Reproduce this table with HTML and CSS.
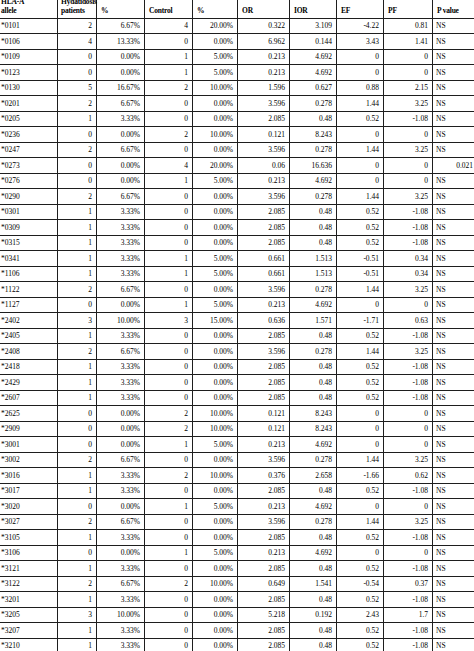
FILE: index.html
```html
<!DOCTYPE html>
<html>
<head>
<meta charset="utf-8">
<link rel="stylesheet" href="styles.css">
</head>
<body>
<table class="hla">
<colgroup>
<col class="c1"><col class="c2"><col class="c3"><col class="c4"><col class="c5"><col class="c6"><col class="c7"><col class="c8"><col class="c9"><col class="c10">
</colgroup>
<thead>
<tr><th>HLA-A<br>allele</th><th>Hydatidosis<br>patients</th><th>%</th><th>Control</th><th>%</th><th>OR</th><th>IOR</th><th>EF</th><th>PF</th><th>P value</th></tr>
</thead>
<tbody>
<tr><td>*0101</td><td>2</td><td>6.67%</td><td>4</td><td>20.00%</td><td>0.322</td><td>3.109</td><td>-4.22</td><td>0.81</td><td class="p">NS</td></tr>
<tr><td>*0106</td><td>4</td><td>13.33%</td><td>0</td><td>0.00%</td><td>6.962</td><td>0.144</td><td>3.43</td><td>1.41</td><td class="p">NS</td></tr>
<tr><td>*0109</td><td>0</td><td>0.00%</td><td>1</td><td>5.00%</td><td>0.213</td><td>4.692</td><td>0</td><td>0</td><td class="p">NS</td></tr>
<tr><td>*0123</td><td>0</td><td>0.00%</td><td>1</td><td>5.00%</td><td>0.213</td><td>4.692</td><td>0</td><td>0</td><td class="p">NS</td></tr>
<tr><td>*0130</td><td>5</td><td>16.67%</td><td>2</td><td>10.00%</td><td>1.596</td><td>0.627</td><td>0.88</td><td>2.15</td><td class="p">NS</td></tr>
<tr><td>*0201</td><td>2</td><td>6.67%</td><td>0</td><td>0.00%</td><td>3.596</td><td>0.278</td><td>1.44</td><td>3.25</td><td class="p">NS</td></tr>
<tr><td>*0205</td><td>1</td><td>3.33%</td><td>0</td><td>0.00%</td><td>2.085</td><td>0.48</td><td>0.52</td><td>-1.08</td><td class="p">NS</td></tr>
<tr><td>*0236</td><td>0</td><td>0.00%</td><td>2</td><td>10.00%</td><td>0.121</td><td>8.243</td><td>0</td><td>0</td><td class="p">NS</td></tr>
<tr><td>*0247</td><td>2</td><td>6.67%</td><td>0</td><td>0.00%</td><td>3.596</td><td>0.278</td><td>1.44</td><td>3.25</td><td class="p">NS</td></tr>
<tr><td>*0273</td><td>0</td><td>0.00%</td><td>4</td><td>20.00%</td><td>0.06</td><td>16.636</td><td>0</td><td>0</td><td>0.021</td></tr>
<tr><td>*0276</td><td>0</td><td>0.00%</td><td>1</td><td>5.00%</td><td>0.213</td><td>4.692</td><td>0</td><td>0</td><td class="p">NS</td></tr>
<tr><td>*0290</td><td>2</td><td>6.67%</td><td>0</td><td>0.00%</td><td>3.596</td><td>0.278</td><td>1.44</td><td>3.25</td><td class="p">NS</td></tr>
<tr><td>*0301</td><td>1</td><td>3.33%</td><td>0</td><td>0.00%</td><td>2.085</td><td>0.48</td><td>0.52</td><td>-1.08</td><td class="p">NS</td></tr>
<tr><td>*0309</td><td>1</td><td>3.33%</td><td>0</td><td>0.00%</td><td>2.085</td><td>0.48</td><td>0.52</td><td>-1.08</td><td class="p">NS</td></tr>
<tr><td>*0315</td><td>1</td><td>3.33%</td><td>0</td><td>0.00%</td><td>2.085</td><td>0.48</td><td>0.52</td><td>-1.08</td><td class="p">NS</td></tr>
<tr><td>*0341</td><td>1</td><td>3.33%</td><td>1</td><td>5.00%</td><td>0.661</td><td>1.513</td><td>-0.51</td><td>0.34</td><td class="p">NS</td></tr>
<tr><td>*1106</td><td>1</td><td>3.33%</td><td>1</td><td>5.00%</td><td>0.661</td><td>1.513</td><td>-0.51</td><td>0.34</td><td class="p">NS</td></tr>
<tr><td>*1122</td><td>2</td><td>6.67%</td><td>0</td><td>0.00%</td><td>3.596</td><td>0.278</td><td>1.44</td><td>3.25</td><td class="p">NS</td></tr>
<tr><td>*1127</td><td>0</td><td>0.00%</td><td>1</td><td>5.00%</td><td>0.213</td><td>4.692</td><td>0</td><td>0</td><td class="p">NS</td></tr>
<tr><td>*2402</td><td>3</td><td>10.00%</td><td>3</td><td>15.00%</td><td>0.636</td><td>1.571</td><td>-1.71</td><td>0.63</td><td class="p">NS</td></tr>
<tr><td>*2405</td><td>1</td><td>3.33%</td><td>0</td><td>0.00%</td><td>2.085</td><td>0.48</td><td>0.52</td><td>-1.08</td><td class="p">NS</td></tr>
<tr><td>*2408</td><td>2</td><td>6.67%</td><td>0</td><td>0.00%</td><td>3.596</td><td>0.278</td><td>1.44</td><td>3.25</td><td class="p">NS</td></tr>
<tr><td>*2418</td><td>1</td><td>3.33%</td><td>0</td><td>0.00%</td><td>2.085</td><td>0.48</td><td>0.52</td><td>-1.08</td><td class="p">NS</td></tr>
<tr><td>*2429</td><td>1</td><td>3.33%</td><td>0</td><td>0.00%</td><td>2.085</td><td>0.48</td><td>0.52</td><td>-1.08</td><td class="p">NS</td></tr>
<tr><td>*2607</td><td>1</td><td>3.33%</td><td>0</td><td>0.00%</td><td>2.085</td><td>0.48</td><td>0.52</td><td>-1.08</td><td class="p">NS</td></tr>
<tr><td>*2625</td><td>0</td><td>0.00%</td><td>2</td><td>10.00%</td><td>0.121</td><td>8.243</td><td>0</td><td>0</td><td class="p">NS</td></tr>
<tr><td>*2909</td><td>0</td><td>0.00%</td><td>2</td><td>10.00%</td><td>0.121</td><td>8.243</td><td>0</td><td>0</td><td class="p">NS</td></tr>
<tr><td>*3001</td><td>0</td><td>0.00%</td><td>1</td><td>5.00%</td><td>0.213</td><td>4.692</td><td>0</td><td>0</td><td class="p">NS</td></tr>
<tr><td>*3002</td><td>2</td><td>6.67%</td><td>0</td><td>0.00%</td><td>3.596</td><td>0.278</td><td>1.44</td><td>3.25</td><td class="p">NS</td></tr>
<tr><td>*3016</td><td>1</td><td>3.33%</td><td>2</td><td>10.00%</td><td>0.376</td><td>2.658</td><td>-1.66</td><td>0.62</td><td class="p">NS</td></tr>
<tr><td>*3017</td><td>1</td><td>3.33%</td><td>0</td><td>0.00%</td><td>2.085</td><td>0.48</td><td>0.52</td><td>-1.08</td><td class="p">NS</td></tr>
<tr><td>*3020</td><td>0</td><td>0.00%</td><td>1</td><td>5.00%</td><td>0.213</td><td>4.692</td><td>0</td><td>0</td><td class="p">NS</td></tr>
<tr><td>*3027</td><td>2</td><td>6.67%</td><td>0</td><td>0.00%</td><td>3.596</td><td>0.278</td><td>1.44</td><td>3.25</td><td class="p">NS</td></tr>
<tr><td>*3105</td><td>1</td><td>3.33%</td><td>0</td><td>0.00%</td><td>2.085</td><td>0.48</td><td>0.52</td><td>-1.08</td><td class="p">NS</td></tr>
<tr><td>*3106</td><td>0</td><td>0.00%</td><td>1</td><td>5.00%</td><td>0.213</td><td>4.692</td><td>0</td><td>0</td><td class="p">NS</td></tr>
<tr><td>*3121</td><td>1</td><td>3.33%</td><td>0</td><td>0.00%</td><td>2.085</td><td>0.48</td><td>0.52</td><td>-1.08</td><td class="p">NS</td></tr>
<tr><td>*3122</td><td>2</td><td>6.67%</td><td>2</td><td>10.00%</td><td>0.649</td><td>1.541</td><td>-0.54</td><td>0.37</td><td class="p">NS</td></tr>
<tr><td>*3201</td><td>1</td><td>3.33%</td><td>0</td><td>0.00%</td><td>2.085</td><td>0.48</td><td>0.52</td><td>-1.08</td><td class="p">NS</td></tr>
<tr><td>*3205</td><td>3</td><td>10.00%</td><td>0</td><td>0.00%</td><td>5.218</td><td>0.192</td><td>2.43</td><td>1.7</td><td class="p">NS</td></tr>
<tr><td>*3207</td><td>1</td><td>3.33%</td><td>0</td><td>0.00%</td><td>2.085</td><td>0.48</td><td>0.52</td><td>-1.08</td><td class="p">NS</td></tr>
<tr><td>*3210</td><td>1</td><td>3.33%</td><td>0</td><td>0.00%</td><td>2.085</td><td>0.48</td><td>0.52</td><td>-1.08</td><td class="p">NS</td></tr>
</tbody>
</table>
</body>
</html>
```
FILE: styles.css
```css
html, body {
  margin: 0;
  padding: 0;
  overflow: hidden;
  background: #fff;
}
body {
  font-family: "Liberation Serif", "Times New Roman", serif;
  color: #000;
}
.hla {
  border-collapse: collapse;
  table-layout: fixed;
  width: 480px;
  margin: -10.5px 0 0 -3px;
  font-size: 7.5px;
}
.c1 { width: 60px; }
.c2 { width: 39px; }
.c3 { width: 48px; }
.c4 { width: 48px; }
.c5 { width: 45px; }
.c6 { width: 52px; }
.c7 { width: 47px; }
.c8 { width: 47px; }
.c9 { width: 49px; }
.c10 { width: 45px; }
.hla th, .hla td {
  border: 1px solid #1e1e1e;
  padding: 0 4px 0 3px;
  white-space: nowrap;
}
.hla th {
  height: 25px;
  text-align: left;
  vertical-align: bottom;
  font-weight: bold;
  font-size: 7.5px;
  letter-spacing: -0.2px;
  line-height: 9.5px;
  padding-bottom: 2px;
  padding-left: 4px;
}
.hla th:first-child,
.hla th:nth-child(2) { padding-left: 3px; padding-right: 0; }
.hla td {
  height: 14.5px;
  line-height: 9px;
  text-align: right;
  vertical-align: middle;
}
.hla td:first-child { text-align: left; }
.hla td.p { text-align: left; }
```
